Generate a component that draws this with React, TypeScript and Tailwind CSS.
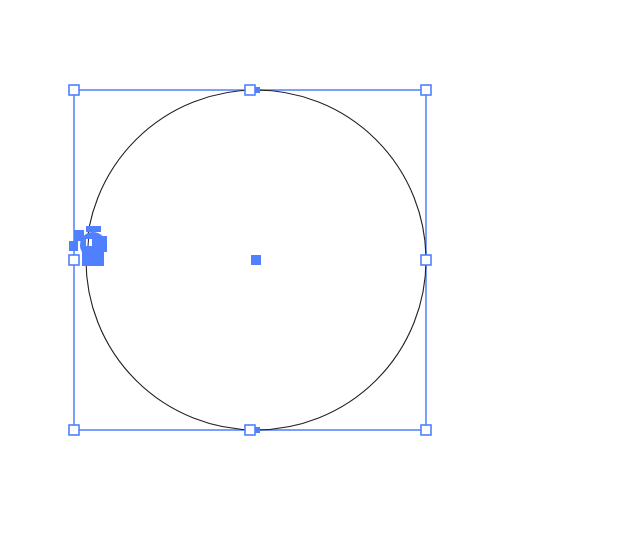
import React from "react";

const B = "#4f80ff";

function Handle({ x, y }: { x: number; y: number }) {
  return <rect x={x - 5} y={y - 5} width={10} height={10} fill="#fff" stroke={B} strokeWidth={1.6} />;
}

export default function App() {
  return (
    <div className="w-[638px] h-[548px] bg-white overflow-hidden">
      <svg width="638" height="548" viewBox="0 0 638 548" className="block">
        <rect x={74} y={90} width={352} height={340} fill="none" stroke={B} strokeWidth={1.5} />
        <circle cx={256} cy={260} r={170} fill="none" stroke="#222" strokeWidth={1.1} />
        {/* anchor points */}
        <rect x={254} y={87} width={6} height={6} fill={B} />
        <rect x={254} y={427} width={6} height={6} fill={B} />
        {/* blob */}
        <g fill={B}>
          <rect x={74} y={230} width={10} height={11} />
          <rect x={69} y={241} width={9} height={10} />
          <rect x={86} y={226} width={15} height={6} />
          <circle cx={93} cy={245} r={13} />
          <rect x={82} y={252} width={22} height={14} />
          <rect x={98} y={236} width={9} height={16} />
        </g>
        <rect x={86} y={239} width={6} height={7} fill="#fff" />
        <path d="M88.5 239 L88 246" stroke="#222" strokeWidth={1} />
        {/* handles */}
        <Handle x={74} y={90} />
        <Handle x={250} y={90} />
        <Handle x={426} y={90} />
        <Handle x={74} y={260} />
        <Handle x={426} y={260} />
        <Handle x={74} y={430} />
        <Handle x={250} y={430} />
        <Handle x={426} y={430} />
        {/* center */}
        <rect x={251} y={255} width={10} height={10} fill={B} />
      </svg>
    </div>
  );
}
